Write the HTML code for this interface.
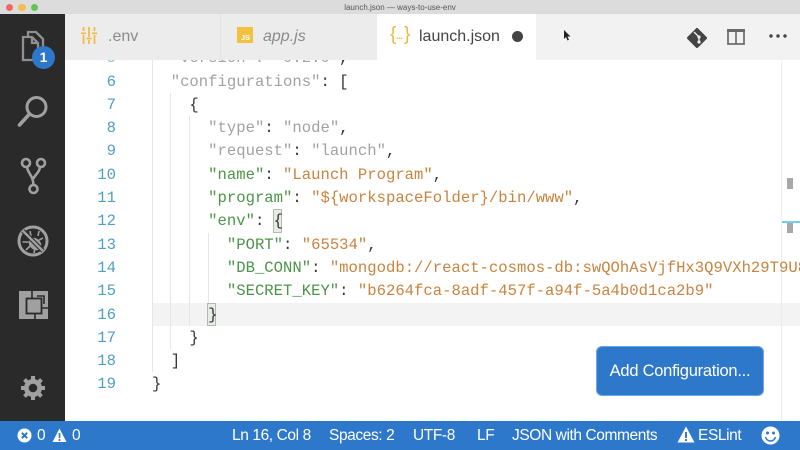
<!DOCTYPE html>
<html><head><meta charset="utf-8">
<style>
html,body{margin:0;padding:0;width:800px;height:450px;overflow:hidden;background:#fff}
body{font-family:"Liberation Sans",sans-serif;position:relative}
.a{position:absolute}
#titlebar{left:0;top:0;width:800px;height:14px;background:#dcdcdc;text-align:center;font-size:8px;line-height:15px;color:#555}
.dot{position:absolute;top:3.5px;width:7.5px;height:7.5px;border-radius:50%}
#side{left:0;top:14px;width:65px;height:407px;background:#2a2a2a}
#tabs{left:65px;top:14px;width:735px;height:46px;background:#f2f2f2}
.tab{position:absolute;top:0;height:46px;background:#ececec}
#code{left:0;top:1px;width:800px;height:449px;font-family:"Liberation Mono",monospace;font-size:15.6px;filter:blur(.35px)}
.l{position:absolute;white-space:pre;line-height:23.3px;height:23.3px;left:152px;color:#333}
.n{position:absolute;width:40px;left:76px;text-align:right;line-height:23.3px;color:#4f9fc2}
.k{color:#4c9448}.s{color:#c9843f}.g{color:#a2a2a2}
.guide{position:absolute;width:1px;background:#e6e6e6}
#status{left:0;top:421px;width:800px;height:29px;background:#2e78cc;color:#fff;font-size:15.5px;line-height:30px;letter-spacing:-.4px;filter:blur(.25px)}
#status span{position:absolute;white-space:pre}
#btn{left:596px;top:346px;width:166px;height:48px;border-radius:6px;background:#2e78cc;border:1px solid #6ea6e0;color:#fff;font-size:16.5px;line-height:48px;text-align:center;letter-spacing:-.26px}
</style></head>
<body>
<div id="code" class="a">
<div class="a" style="left:152px;top:302px;width:648px;height:23px;background:#f3f3f3"></div>
<div class="a" style="left:781px;top:60px;width:1px;height:360px;background:#ececec"></div>
<div class="guide" style="left:152px;top:59px;height:312px"></div>
<div class="guide" style="left:170px;top:92px;height:256px"></div>
<div class="guide" style="left:189px;top:115px;height:210px"></div>
<div class="guide" style="left:207.5px;top:232px;height:93px"></div>
<div class="a" style="left:272.5px;top:208px;width:9.5px;height:24px;background:#e6eee4;border:1px solid #b4b8b4;box-sizing:border-box"></div>
<div class="a" style="left:206.5px;top:301.500px;width:9.5px;height:23.500px;background:#e6eee4;border:1px solid #b4b8b4;box-sizing:border-box"></div>

<div class="n" style="top:46px;color:#8fbfd4">5</div>
<div class="n" style="top:69.5px">6</div>
<div class="n" style="top:92.8px">7</div>
<div class="n" style="top:116.1px">8</div>
<div class="n" style="top:139.4px">9</div>
<div class="n" style="top:162.7px">10</div>
<div class="n" style="top:186px">11</div>
<div class="n" style="top:209.3px">12</div>
<div class="n" style="top:232.6px">13</div>
<div class="n" style="top:255.9px">14</div>
<div class="n" style="top:279.2px">15</div>
<div class="n" style="top:302.5px">16</div>
<div class="n" style="top:325.8px">17</div>
<div class="n" style="top:349.1px">18</div>
<div class="n" style="top:372.4px">19</div>

<div class="l" style="top:46px"><span class="g">  "version": "0.2.0"</span>,</div>
<div class="l" style="top:69.5px">  <span class="g">"configurations"</span>: [</div>
<div class="l" style="top:92.8px">    {</div>
<div class="l" style="top:116.1px">      <span class="g">"type"</span>: <span class="g">"node"</span>,</div>
<div class="l" style="top:139.4px">      <span class="g">"request"</span>: <span class="g">"launch"</span>,</div>
<div class="l" style="top:162.7px">      <span class="k">"name"</span>: <span class="s">"Launch Program"</span>,</div>
<div class="l" style="top:186px">      <span class="k">"program"</span>: <span class="s">"${workspaceFolder}/bin/www"</span>,</div>
<div class="l" style="top:209.3px">      <span class="k">"env"</span>: {</div>
<div class="l" style="top:232.6px">        <span class="k">"PORT"</span>: <span class="s">"65534"</span>,</div>
<div class="l" style="top:255.9px;width:648px;overflow:hidden">        <span class="k">"DB_CONN"</span>: <span class="s">"mongodb://react-cosmos-db:swQOhAsVjfHx3Q9VXh29T9U8</span></div>
<div class="l" style="top:279.2px">        <span class="k">"SECRET_KEY"</span>: <span class="s">"b6264fca-8adf-457f-a94f-5a4b0d1ca2b9"</span></div>
<div class="l" style="top:302.5px">      }</div>
<div class="l" style="top:325.8px">    }</div>
<div class="l" style="top:349.1px">  ]</div>
<div class="l" style="top:372.4px">}</div>

<div class="a" style="left:787px;top:177px;width:6px;height:11px;background:#a8a8a8"></div>
<div class="a" style="left:787px;top:221px;width:6px;height:11px;background:#a8a8a8"></div>
<div class="a" style="left:782px;top:220px;width:18px;height:2px;background:#6fd0ec"></div>
</div>

<div id="titlebar" class="a">launch.json — ways-to-use-env
<div class="dot" style="left:5.5px;background:#ee6a5f"></div>
<div class="dot" style="left:18px;background:#f5bd4f"></div>
<div class="dot" style="left:30.5px;background:#61c454"></div>
</div>

<div id="side" class="a"></div>
<div id="tabs" class="a">
<div class="tab" style="left:0;width:155px;border-right:1px solid #e4e4e4"></div>
<div class="tab" style="left:156px;width:156px"></div>
<div class="tab" style="left:312px;width:159px;background:#fff"></div>
</div>

<!-- tab contents -->
<svg class="a" style="left:81px;top:27px" width="16" height="17" viewBox="0 0 16 17" fill="none" stroke="#f2b83c" stroke-width="1.7">
<path d="M2.500 0v4M2.500 8v9M8 0v10M8 13v4M13.500 0v4M13.500 8v9M0 6.300h5M5.500 11.500h5M11 6.300h5"/></svg>
<div class="a" style="left:108px;top:26px;font-size:16px;line-height:22px;color:#8a8a8a">.env</div>
<div class="a" style="left:237px;top:27px;width:16px;height:16px;background:#f2c23e;color:#fff;font-size:7.5px;font-weight:bold;line-height:22px;text-align:center;text-indent:1px">JS</div>
<div class="a" style="left:263px;top:26px;font-size:16px;line-height:22px;color:#8a8a8a;font-style:italic">app.js</div>
<div class="a" style="left:390px;top:24px;font-size:19px;line-height:22px;color:#f2b83c">{</div>
<div class="a" style="left:404px;top:24px;font-size:19px;line-height:22px;color:#f2b83c">}</div>
<div class="a" style="left:396px;top:29px;font-size:9px;line-height:14px;color:#f2b83c;font-weight:bold;letter-spacing:-.3px">...</div>
<div class="a" style="left:419px;top:26px;font-size:16px;line-height:22px;color:#444">launch.json</div>
<div class="a" style="left:512px;top:31px;width:11px;height:11px;border-radius:50%;background:#444"></div>

<!-- cursor -->
<svg class="a" style="left:563px;top:30px" width="9" height="12" viewBox="0 0 9 12"><path d="M1 0v9l2-2 1.500 3.500 1.500-.7L4.500 6.500H7.500z" fill="#222"/></svg>

<!-- git diamond -->
<svg class="a" style="left:686px;top:27px" width="22" height="22" viewBox="0 0 22 22">
<rect x="3.500" y="3.500" width="15" height="15" rx="1.500" transform="rotate(45 11 11)" fill="#444"/>
<path d="M8 5l5 5v4M13 10" stroke="#f2f2f2" stroke-width="1.300" fill="none"/><circle cx="13" cy="10" r="1.600" fill="#f2f2f2"/><circle cx="13" cy="15" r="1.600" fill="#f2f2f2"/></svg>
<!-- split -->
<svg class="a" style="left:727px;top:29px" width="18" height="16" viewBox="0 0 18 16"><rect x="1" y="1" width="16" height="14" fill="none" stroke="#6a6a6a" stroke-width="1.700"/><rect x="0" y="0" width="18" height="3" fill="#6a6a6a"/><rect x="8.200" y="1" width="1.600" height="14" fill="#6a6a6a"/></svg>
<!-- dots -->
<svg class="a" style="left:769px;top:33px" width="18" height="6" viewBox="0 0 18 6" fill="#444"><circle cx="2" cy="3" r="1.700"/><circle cx="9" cy="3" r="1.700"/><circle cx="16" cy="3" r="1.700"/></svg>

<!-- activity bar -->
<svg class="a" style="left:20px;top:30px" width="28" height="34" viewBox="0 0 28 34" fill="none" stroke="#8f8f8f" stroke-width="2.300">
<path d="M3 7h9l6 6v17H3z"/><path d="M8 6V2h8l7 7v15h-4"/><path d="M12 7v6h6"/></svg>
<div class="a" style="left:32px;top:46px;width:23px;height:23px;border-radius:50%;background:#2e78cc;color:#fff;font-size:14px;font-weight:bold;line-height:23px;text-align:center">1</div>

<svg class="a" style="left:16px;top:94px" width="34" height="34" viewBox="0 0 34 34" fill="none" stroke="#a0a0a0">
<circle cx="20.500" cy="13" r="9.500" stroke-width="3"/><path d="M13.500 20L3.500 31" stroke-width="3.600" stroke-linecap="round"/></svg>

<svg class="a" style="left:19px;top:156px" width="29" height="40" viewBox="0 0 29 40" fill="none" stroke="#a0a0a0" stroke-width="2.600">
<circle cx="7" cy="7" r="4"/><circle cx="22" cy="7" r="4"/><circle cx="14.500" cy="33" r="4"/>
<path d="M8 11c1 7 6 8 6.500 18M21 11c-1 7-6 8-6.500 12" /></svg>

<svg class="a" style="left:16px;top:224px" width="34" height="34" viewBox="0 0 34 34" fill="none" stroke="#a0a0a0">
<circle cx="17" cy="17" r="14" stroke-width="3"/>
<ellipse cx="19" cy="20" rx="5.500" ry="7" fill="#a0a0a0" stroke="none" transform="rotate(-45 19 20)"/>
<path d="M6.500 18h6M10 26l4-4M18 29l1-5M14 7l1 5M23 7l-1 5M27 14l-4 2" stroke-width="1.600"/>
<path d="M7 7l20 20" stroke="#2a2a2a" stroke-width="4.500"/><path d="M7 7l20 20" stroke="#a0a0a0" stroke-width="2.500"/></svg>

<svg class="a" style="left:19px;top:291px" width="29" height="28" viewBox="0 0 29 28">
<rect width="29" height="28" fill="#a0a0a0"/>
<rect x="7.500" y="7.500" width="15" height="15" fill="#a0a0a0" stroke="#2a2a2a" stroke-width="1.800"/>
<path d="M13 0v7M22 17h7M16 23v5M18 5h7v8" fill="none" stroke="#2a2a2a" stroke-width="1.600"/></svg>

<svg class="a" style="left:20px;top:375px" width="26" height="26" viewBox="0 0 26 26">
<path d="M13 13L13 1M13 13L13 25M13 13L1 13M13 13L25 13M13 13L4.500 4.500M13 13L21.500 21.500M13 13L4.500 21.500M13 13L21.500 4.500" stroke="#a0a0a0" stroke-width="4"/>
<circle cx="13" cy="13" r="9" fill="#a0a0a0"/><circle cx="13" cy="13" r="4.300" fill="#2a2a2a"/></svg>

<!-- button -->
<div id="btn" class="a">Add Configuration...</div>

<!-- status -->
<div id="status" class="a">
<svg class="a" style="left:17px;top:7px" width="15" height="15" viewBox="0 0 15 15"><circle cx="7.500" cy="7.500" r="7" fill="#fff"/><path d="M4.800 4.800l5.400 5.400M10.200 4.800l-5.400 5.400" stroke="#2e78cc" stroke-width="2"/></svg>
<span style="left:37px">0</span>
<svg class="a" style="left:52px;top:7px" width="15" height="15" viewBox="0 0 15 15"><path d="M7.500 .5L14.500 14H.5z" fill="#fff"/><path d="M7.500 5v5M7.500 11v2" stroke="#2e78cc" stroke-width="1.700"/></svg>
<span style="left:72px">0</span>
<span style="left:232px">Ln 16, Col 8</span>
<span style="left:329px">Spaces: 2</span>
<span style="left:413px">UTF-8</span>
<span style="left:477px">LF</span>
<span style="left:512px">JSON with Comments</span>
<svg class="a" style="left:677px;top:5px" width="18" height="18" viewBox="0 0 18 18"><path d="M9 .5L17.500 16.500H.5z" fill="#fff"/><path d="M9 6v6M9 13v2" stroke="#2e78cc" stroke-width="1.900"/></svg>
<span style="left:698px">ESLint</span>
<svg class="a" style="left:761px;top:5px" width="19" height="19" viewBox="0 0 19 19"><circle cx="9.500" cy="9.500" r="9" fill="#fff"/><circle cx="6.500" cy="7" r="1.500" fill="#2e78cc"/><circle cx="12.500" cy="7" r="1.500" fill="#2e78cc"/><path d="M4.500 11c1 3 3 4 5 4s4-1 5-4" fill="none" stroke="#2e78cc" stroke-width="1.500"/></svg>
</div>
</body></html>
